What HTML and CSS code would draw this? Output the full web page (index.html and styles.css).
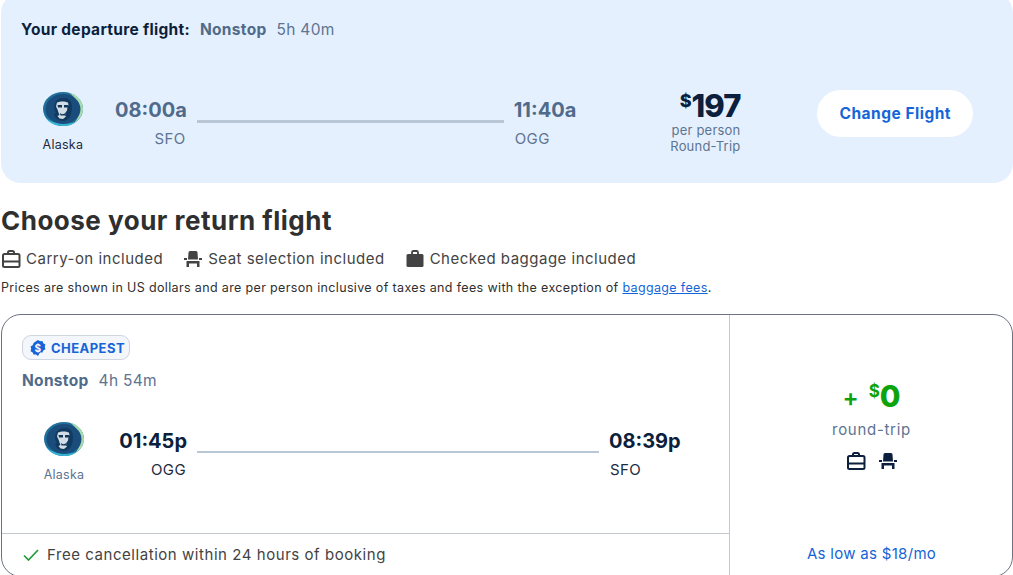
FILE: index.html
```html
<!DOCTYPE html>
<html lang="en">
<head>
<meta charset="utf-8">
<title>Choose your return flight</title>
<link rel="stylesheet" href="styles.css">
</head>
<body>
<svg class="defs" width="0" height="0" aria-hidden="true">
  <symbol id="logo" viewBox="0 0 40 34">
    <ellipse cx="20" cy="17" rx="20" ry="17" fill="#1f6f9c"/>
    <path d="M26 .8C34 2.500 40 9 40 17c0 6-4 11-9 14 4-4 6-9 5-15-1-6-4-11-10-15.200z" fill="#a8dcae"/>
    <path d="M2 25C6 31 12 34 20 34c5 0 9-1 12-4-8 3-21 3-30-5z" fill="#35b4d2"/>
    <ellipse cx="20" cy="17" rx="17.500" ry="15" fill="#1b4d7c"/>
    <path d="M11 16c0-7 4-10 9.500-10S29 9 29 15c0 7-3 14-9 14-5 0-8-3-9-7l2-1c-1-2-2-3-2-5z" fill="#113a61"/>
    <path d="M14 10.500c3-1.500 8-1.500 11 0l.5 3-1 1.500-.5 3.500-1.500 2-.5 3 1 1-3 2.500-3.500-.5-2-2.500 2-1-1-2.500-1-3-1.500-3z" fill="#d3dde5"/>
    <path d="M14.500 13h4.500v2.500h-4zM21 13h4.500l-.5 2.500h-4zM17 21c1.500 1.500 3.500 1.500 5.500 0l-.5 2.500h-4.500z" fill="#12375a"/>
  </symbol>
  <symbol id="bag" viewBox="0 0 20 20">
    <path d="M7 5V3.500A1.500 1.500 0 0 1 8.500 2h3A1.500 1.500 0 0 1 13 3.500V5" fill="none" stroke="currentColor" stroke-width="2"/>
    <rect x="2" y="5" width="16.500" height="13" rx="1.500" fill="none" stroke="currentColor" stroke-width="2"/>
    <path d="M2 12.500h16" stroke="currentColor" stroke-width="2"/>
  </symbol>
  <symbol id="seat" viewBox="0 0 20 20">
    <path d="M5.500 3.500A1.500 1.500 0 0 1 7 2h6a1.500 1.500 0 0 1 1.500 1.500L15 10.500H5z" fill="currentColor"/>
    <rect x="1" y="9" width="3" height="2" fill="currentColor"/>
    <rect x="16" y="9" width="3" height="2" fill="currentColor"/>
    <path d="M3.500 12h13v6h-2.500v-3.500H6V18H3.500z" fill="currentColor"/>
  </symbol>
  <symbol id="case" viewBox="0 0 20 20">
    <path d="M7 5V3.500A1.500 1.500 0 0 1 8.500 2h3A1.500 1.500 0 0 1 13 3.500V5" fill="none" stroke="currentColor" stroke-width="1.800"/>
    <rect x="1.500" y="5" width="17" height="13" rx="1.500" fill="currentColor"/>
  </symbol>
</svg>

<section class="summary">
  <p class="summary-head"><strong>Your departure flight:</strong><b>Nonstop</b><span>5h 40m</span></p>
  <div class="summary-row">
    <div class="airline">
      <svg class="logo"><use href="#logo"/></svg>
      <span>Alaska</span>
    </div>
    <div class="times muted">
      <div class="stop stop-start"><b>08:00a</b><span>SFO</span></div>
      <div class="track"></div>
      <div class="stop stop-end"><b>11:40a</b><span>OGG</span></div>
    </div>
    <div class="price">
      <div class="amount"><sup>$</sup>197</div>
      <span>per person</span>
      <span>Round-Trip</span>
    </div>
    <button class="change" type="button">Change Flight</button>
  </div>
</section>

<h1>Choose your return flight</h1>
<ul class="perks">
  <li><svg class="icon"><use href="#bag"/></svg>Carry-on included</li>
  <li><svg class="icon"><use href="#seat"/></svg>Seat selection included</li>
  <li><svg class="icon"><use href="#case"/></svg>Checked baggage included</li>
</ul>
<p class="note">Prices are shown in US dollars and are per person inclusive of taxes and fees with the exception of <a href="#">baggage fees</a>.</p>

<article class="card">
  <div class="card-main">
    <div class="card-body">
      <span class="badge">
        <svg class="badge-icon" viewBox="0 0 16 16"><path d="M8 0l2 1.300 2.400-.2.900 2.200 2.100 1.200-.6 2.300.6 2.400-2.100 1.200-.9 2.200-2.400-.1L8 16l-2-1.500-2.400.1-.9-2.200-2.100-1.200.6-2.400L.6 6.500l2.100-1.200.9-2.200L6 1.300z" fill="#1565d8"/><text x="8" y="11.500" text-anchor="middle" class="badge-glyph">$</text></svg>
        CHEAPEST
      </span>
      <p class="duration"><b>Nonstop</b><span>4h 54m</span></p>
      <div class="return-row">
        <div class="airline airline-light">
          <svg class="logo"><use href="#logo"/></svg>
          <span>Alaska</span>
        </div>
        <div class="times dark">
          <div class="stop stop-start"><b>01:45p</b><span>OGG</span></div>
          <div class="track"></div>
          <div class="stop stop-end"><b>08:39p</b><span>SFO</span></div>
        </div>
      </div>
    </div>
    <div class="card-foot">
      <svg class="check" viewBox="0 0 16 12"><path d="M1 6.500l4.500 4.500L15 1" fill="none" stroke="#1f9d3a" stroke-width="1.700"/></svg>
      Free cancellation within 24 hours of booking
    </div>
  </div>
  <aside class="card-side">
    <div class="fare"><span class="plus">+</span><span class="fare-value"><sup>$</sup>0</span></div>
    <div class="fare-label">round-trip</div>
    <div class="fare-icons">
      <svg class="icon"><use href="#bag"/></svg>
      <svg class="icon"><use href="#seat"/></svg>
    </div>
    <a class="monthly" href="#">As low as $18/mo</a>
  </aside>
</article>
</body>
</html>
```

FILE: styles.css
```css
* { box-sizing: border-box; }
html, body { height: 100%; }
body {
  margin: 0;
  padding-left: 1px;
  overflow: hidden;
  background: #fff;
  color: #2f2f2f;
  font-family: Inter, "Open Sans", "Liberation Sans", sans-serif;
}
.defs { position: absolute; }
p, h1, ul { margin: 0; padding: 0; }
b, strong { font-weight: 700; }

.summary {
  height: 190px;
  margin-top: -7px;
  padding: 26px 40px 0 20px;
  background: #e5f0fe;
  border-radius: 20px;
}
.summary-head {
  display: flex;
  gap: 10px;
  height: 20px;
  align-items: center;
  font-size: 15.500px;
  letter-spacing: .3px;
  color: #0c1f3d;
}
.summary-head b { color: #4f6a8a; }
.summary-head span { color: #5d7492; }

.summary-row {
  display: flex;
  align-items: flex-start;
  margin-top: 49px;
}
.airline {
  display: flex;
  flex-direction: column;
  align-items: center;
  width: 84px;
  font-size: 12.500px;
  letter-spacing: .25px;
  color: #1c2b3f;
}
.summary-row .airline { margin-right: 10px; padding-top: 4px; }
.logo { width: 40px; height: 34px; margin-bottom: 11px; }
.airline-light .logo { margin-bottom: 11px; }
.airline span { line-height: 16px; }

.times { display: flex; flex: none; }
.summary-row .times { width: 461px; padding-top: 9px; }
.stop { display: flex; flex-direction: column; flex: none; }
.stop b { font-size: 20px; line-height: 26px; }
.stop span { font-size: 15px; letter-spacing: .4px; line-height: 20px; margin-top: 6px; }
.stop-start { align-items: flex-end; }
.stop-end { align-items: flex-start; }
.track { flex: 1; height: 3px; margin: 23px 10px 0; background: #b9c6d6; }
.muted { color: #4f6a8a; }
.muted .stop span { color: #5d7492; }
.dark { color: #0c1f3d; }
.dark .stop span { color: #1c2b3f; }
.summary-row .stop-start { width: 72px; }
.summary-row .stop-end { width: 62px; }
.stop-end span { padding-left: 1px; }
.stop-start span { padding-right: 1px; }

.price {
  display: flex;
  flex-direction: column;
  align-items: flex-end;
  width: 100px;
  margin-left: 65px;
  padding-top: 1px;
  font-size: 13px;
  letter-spacing: .2px;
  line-height: 16px;
  color: #5d7492;
}
.amount {
  margin-bottom: -1px;
  color: #0c1f3d;
  font-size: 31px;
  font-weight: 800;
  line-height: 34px;
  letter-spacing: -1px;
}
.amount sup { font-size: 18px; line-height: 0; vertical-align: 10px; letter-spacing: 0; }

.change {
  width: 156px;
  height: 47px;
  margin: 2px 0 0 77px;
  border: 0;
  border-radius: 24px;
  background: #fff;
  color: #1565d8;
  font: 700 15.500px Inter, "Open Sans", sans-serif;
  letter-spacing: .5px;
}

h1 {
  margin-top: 23px;
  font-size: 26px;
  letter-spacing: .5px;
  line-height: 30px;
  font-weight: 700;
  color: #2f2f2f;
}
.perks {
  display: flex;
  gap: 20px;
  margin-top: 13px;
  list-style: none;
  font-size: 15px;
  letter-spacing: .5px;
  line-height: 20px;
  color: #434343;
}
.perks li { display: flex; align-items: center; gap: 5px; }
.icon { width: 20px; height: 20px; flex: none; }
.note {
  margin-top: 11px;
  font-size: 12.500px;
  letter-spacing: .35px;
  line-height: 16px;
  color: #2f2f2f;
}
.note a { color: #1565d8; }

.card {
  display: flex;
  height: 263px;
  margin-top: 18px;
  border: 1px solid #6b7280;
  border-radius: 20px;
  overflow: hidden;
}
.card-main {
  display: flex;
  flex: none;
  flex-direction: column;
  width: 728px;
  border-right: 1px solid #c3c8cf;
}
.card-body { flex: 1; padding: 20px 0 0 20px; }
.badge {
  display: inline-flex;
  align-items: center;
  gap: 5px;
  height: 25px;
  padding: 0 4px 0 7px;
  border: 1px solid #cfd6e0;
  border-radius: 9px;
  background: #f3f6fa;
  color: #1565d8;
  font-size: 13px;
  letter-spacing: .45px;
  font-weight: 700;
}
.badge-icon { width: 16px; height: 16px; }
.badge-glyph { fill: #fff; font-size: 10px; font-weight: 700; }
.duration {
  display: flex;
  gap: 10px;
  margin-top: 11px;
  font-size: 15.500px;
  letter-spacing: .3px;
  line-height: 20px;
  color: #4f6a8a;
}
.duration span { color: #5d7492; }

.return-row { display: flex; align-items: flex-start; margin-top: 31px; }
.airline-light { margin-right: 15px; color: #5d7492; }
.return-row .times { width: 560px; margin-top: 6px; }
.return-row .stop-start { width: 66px; }
.return-row .stop-end { width: 72px; }
.return-row .track { height: 2px; margin-top: 23px; }

.card-foot {
  display: flex;
  align-items: center;
  gap: 8px;
  height: 43px;
  padding: 0 0 1px 21px;
  border-top: 1px solid #c3c8cf;
  font-size: 15px;
  letter-spacing: .55px;
  color: #434343;
}
.check { width: 16px; height: 12px; flex: none; }

.card-side {
  display: flex;
  flex: 1;
  flex-direction: column;
  align-items: center;
  padding-top: 62px;
  padding-left: 1px;
}
.fare { display: flex; align-items: flex-end; gap: 10px; height: 36px; color: #0ca30c; }
.plus { font-size: 24px; font-weight: 600; line-height: 30px; }
.fare-value { font-size: 30px; font-weight: 800; line-height: 34px; }
.fare-value sup { font-size: 17px; line-height: 0; vertical-align: 10px; font-weight: 700; }
.fare-label { margin-top: 7px; font-size: 15px; letter-spacing: .7px; line-height: 20px; color: #5d7492; }
.fare-icons { display: flex; gap: 12px; margin-top: 11px; color: #0c1f3d; }
.monthly {
  margin-top: auto;
  margin-bottom: 12px;
  font-size: 15px;
  letter-spacing: .3px;
  line-height: 20px;
  color: #1565d8;
  text-decoration: none;
}
```
